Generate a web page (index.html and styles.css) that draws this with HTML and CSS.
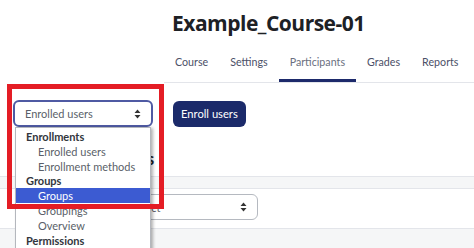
FILE: index.html
```html
<!DOCTYPE html>
<html lang="en">
<head>
    <meta charset="UTF-8">
    <title>Participants</title>
    <link rel="stylesheet" href="styles.css">
</head>
<body>
    <div class="page">
        <h1 class="course-title">Example_Course-01</h1>
        <ul class="course-nav">
            <li>Course</li>
            <li>Settings</li>
            <li class="active">Participants</li>
            <li>Grades</li>
            <li>Reports</li>
        </ul>

        <div class="toolbar">
            <div class="select-wrap">
                <div class="select open">
                    <span>Enrolled users</span>
                    <svg class="caret" width="7" height="10" viewBox="0 0 7 10"><path d="M3.5 0.5 L6.5 4 L0.5 4 Z M3.5 9.5 L6.5 6 L0.5 6 Z" fill="#333"/></svg>
                </div>
                <ul class="menu">
                    <li class="group">Enrollments</li>
                    <li>Enrolled users</li>
                    <li>Enrollment methods</li>
                    <li class="group">Groups</li>
                    <li class="selected">Groups</li>
                    <li>Groupings</li>
                    <li>Overview</li>
                    <li class="group">Permissions</li>
                </ul>
            </div>
            <button class="btn-primary">Enroll users</button>
            <div class="highlight-box"></div>
        </div>

        <h2 class="section-title">Enrolled users</h2>
        <div class="filter-head"></div>
        <div class="filter-row">
            <div class="select filter-select">
                <span>Select</span>
                <svg class="caret" width="7" height="10" viewBox="0 0 7 10"><path d="M3.5 0.5 L6.5 4 L0.5 4 Z M3.5 9.5 L6.5 6 L0.5 6 Z" fill="#333"/></svg>
            </div>
        </div>
        <div class="filter-foot"></div>
    </div>
</body>
</html>
```

FILE: styles.css
```css
body {
    margin: 0;
    font-family: Lato, "Open Sans", Arial, sans-serif;
    background-color: #fff;
    color: #1d2125;
    overflow: hidden;
}

.page {
    width: 474px;
    height: 248px;
    overflow: hidden;
}

.course-title {
    margin: 0;
    padding: 9px 0 0 172px;
    height: 33px;
    font-family: "Open Sans", Arial, sans-serif;
    font-size: 21px;
    font-weight: 700;
    letter-spacing: -0.5px;
    color: #1d2125;
}

.course-nav {
    list-style: none;
    margin: 0 0 0 164px;
    padding: 0;
    display: flex;
    border-bottom: 1px solid #e3e5ea;
    height: 41px;
    box-sizing: border-box;
}

.course-nav li {
    padding: 13px 11px 0;
    font-size: 10.7px;
    color: #4b5067;
    box-sizing: border-box;
}

.course-nav li.active {
    color: #6a6f80;
    border-bottom: 3px solid #1d2a6b;
}

.toolbar {
    position: relative;
    display: flex;
    align-items: center;
    padding: 17px 0 0 13px;
}

.select-wrap {
    position: relative;
}

.select {
    display: flex;
    align-items: center;
    justify-content: space-between;
    box-sizing: border-box;
    border: 1px solid #8f959e;
    border-radius: 6px;
    font-size: 11px;
    color: #5a5f69;
    background-color: #fff;
}

.select.open {
    width: 140px;
    height: 27px;
    padding: 0 10px 0 10px;
    border: 2px solid #4f5aa3;
}

.menu {
    position: absolute;
    z-index: 2;
    top: 27px;
    left: 2px;
    width: 136px;
    height: 130px;
    margin: 0;
    padding: 1px 0 0;
    list-style: none;
    background-color: #fff;
    border: 1px solid #b4b7bd;
    box-shadow: 2px 1px 3px rgba(0, 0, 0, 0.3);
    box-sizing: border-box;
}

.menu li {
    height: 14.8px;
    line-height: 16px;
    padding-left: 22px;
    font-size: 11px;
    color: #5a5f69;
    white-space: nowrap;
}

.menu li.group {
    padding-left: 10px;
    font-weight: 700;
    color: #32363d;
}

.menu li.selected {
    background-color: #3c5bd2;
    color: #fff;
}

.btn-primary {
    margin-left: 20px;
    height: 26px;
    padding: 0 8px;
    border: none;
    border-radius: 6px;
    background-color: #1b2a6a;
    color: #fff;
    font-family: Lato, "Open Sans", Arial, sans-serif;
    font-size: 11.2px;
}

/* red annotation frame drawn over the screenshot */
.highlight-box {
    position: absolute;
    z-index: 3;
    left: 7px;
    top: 1px;
    width: 157px;
    height: 125px;
    border: 5px solid #e41d25;
    box-sizing: border-box;
}

.section-title {
    margin: 22px 0 0 48px;
    height: 27px;
    line-height: 20px;
    font-size: 17px;
    font-weight: 700;
}

.filter-head {
    height: 11px;
    background-color: #f5f6f7;
    border-top: 1px solid #e3e5ea;
    border-bottom: 1px solid #e3e5ea;
}

.filter-row {
    height: 39px;
    padding: 5px 0 0 118px;
    box-sizing: border-box;
}

.filter-select {
    width: 140px;
    height: 26px;
    padding: 0 10px 0 12px;
    border-color: #b5b9c0;
}

.filter-foot {
    height: 20px;
    background-color: #f5f6f7;
    border-top: 1px solid #e3e5ea;
}
```
